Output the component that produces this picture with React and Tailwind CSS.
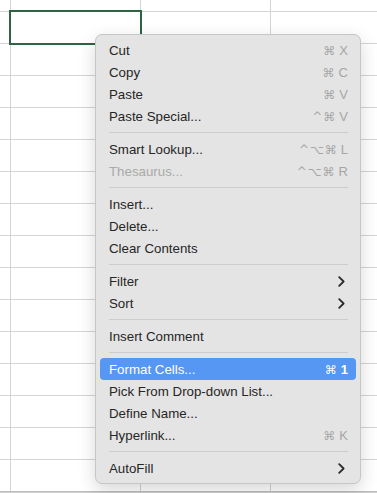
import React from "react";

const Chevron = () => (
  <svg width="7" height="11" viewBox="0 0 7 11" className="block">
    <path d="M1.2 1.2 L5.6 5.5 L1.2 9.8" fill="none" stroke="#2a2a2a" strokeWidth="1.8" strokeLinecap="round" strokeLinejoin="round" />
  </svg>
);

const groups = [
  [
    { label: "Cut", sc: "⌘X" },
    { label: "Copy", sc: "⌘C" },
    { label: "Paste", sc: "⌘V" },
    { label: "Paste Special...", sc: "^⌘V" },
  ],
  [
    { label: "Smart Lookup...", sc: "^⌥⌘L" },
    { label: "Thesaurus...", sc: "^⌥⌘R", disabled: true },
  ],
  [{ label: "Insert..." }, { label: "Delete..." }, { label: "Clear Contents" }],
  [
    { label: "Filter", sub: true },
    { label: "Sort", sub: true },
  ],
  [{ label: "Insert Comment" }],
  [
    { label: "Format Cells...", sc: "⌘1", active: true },
    { label: "Pick From Drop-down List..." },
    { label: "Define Name..." },
    { label: "Hyperlink...", sc: "⌘K" },
  ],
  [{ label: "AutoFill", sub: true }],
];

function Shortcut({ sc, active }) {
  const key = sc.slice(-1);
  const mods = sc.slice(0, -1);
  return (
    <span
      className={
        "flex items-center gap-[3px] text-[13px] " +
        (active ? "text-white" : "text-[#a6a6a6]")
      }
    >
      <span className="tracking-[1px] text-[12px]" style={{ fontFamily: '"DejaVu Sans", sans-serif' }}>{mods}</span>
      <span className={active ? "font-semibold" : ""}>{key}</span>
    </span>
  );
}

function Item({ item }) {
  const base = "h-[22px] mx-[4px] pl-[9px] pr-[8px] pt-px flex items-center justify-between rounded-[4px] text-[13.3px]";
  const cls = item.active
    ? "bg-[#5597f3] text-white"
    : item.disabled
    ? "text-[#a9a9a9]"
    : "text-[#262626]";
  return (
    <div className={base + " " + cls}>
      <span>{item.label}</span>
      {item.sc ? (
        <Shortcut sc={item.sc} active={item.active} />
      ) : item.sub ? (
        <span className="pr-[3px]">
          <Chevron />
        </span>
      ) : null}
    </div>
  );
}

function Separator() {
  return (
    <div className="h-[11px] flex items-center ml-[13px] mr-[12px]">
      <div className="h-px w-full bg-[#cdcdcd]" />
    </div>
  );
}

function GridRow({ first }) {
  return (
    <div
      className={
        "flex shrink-0 " +
        (first ? "h-[11px]" : "h-[32px] border-t border-[#d4d4d4]")
      }
    >
      <div className="w-[10px] shrink-0" />
      <div className="w-[130px] shrink-0 border-l border-[#d4d4d4]" />
      <div className="w-[130px] shrink-0 border-l border-[#d4d4d4]" />
      <div className="flex-1 border-l border-[#d4d4d4]" />
    </div>
  );
}

export default function App() {
  const rows = Array.from({ length: 15 });
  return (
    <div
      className="relative w-[377px] h-[493px] overflow-hidden bg-white flex flex-col"
      style={{ fontFamily: '"Liberation Sans", "DejaVu Sans", sans-serif' }}
    >
      <GridRow first />
      {rows.map((_, i) => (
        <GridRow key={i} />
      ))}
      <div className="flex-1 bg-[#cfcfcf] border-t border-[#bdbdbd]" />

      {/* selected cell */}
      <div className="absolute left-[9px] top-[10px] w-[133px] h-[35px] border-2 border-[#2f6443]" />

      {/* context menu */}
      <div className="absolute left-[95px] top-[34px] w-[266px] h-[450px] box-border bg-[#e4e4e4] border border-[#c6c6c6] rounded-[7px] pt-[4px] pb-[4px] shadow-[0_6px_18px_rgba(0,0,0,0.16)]">
        {groups.map((g, gi) => (
          <React.Fragment key={gi}>
            {gi > 0 && <Separator />}
            {g.map((it) => (
              <Item key={it.label} item={it} />
            ))}
          </React.Fragment>
        ))}
      </div>
    </div>
  );
}
